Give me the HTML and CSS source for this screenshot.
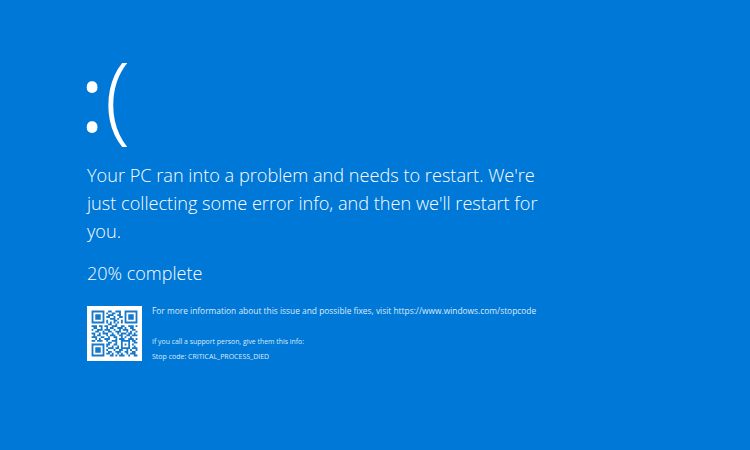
FILE: index.html
```html
<!DOCTYPE html>
<html lang="en">
<head>
    <meta charset="UTF-8">
    <meta name="viewport" content="width=device-width, initial-scale=1.0">
    <link rel="stylesheet" href="styles.css">
    <title>Stop code</title>
</head>
<body>
    <main class="pantalla">
        <div class="cara"><span class="caraOjos">:</span><span class="caraBoca">(</span></div>
        <p class="mensaje">Your PC ran into a problem and needs to restart. We're just collecting some error info, and then we'll restart for you.</p>
        <p class="progreso">20% complete</p>

        <div class="detalle">
            <!-- QR -->
            <svg class="qr" viewBox="0 0 30 30" aria-hidden="true">
                <rect class="qrFondo" width="30" height="30"/>
                <g transform="translate(2.5 2.5)">
                    <path class="qrModulos" d="M0 .5h7M18 .5h7M0 1.5h1M6 1.5h1M18 1.5h1M24 1.5h1M0 2.5h1M2 2.5h3M6 2.5h1M18 2.5h1M20 2.5h3M24 2.5h1M0 3.5h1M2 3.5h3M6 3.5h1M18 3.5h1M20 3.5h3M24 3.5h1M0 4.5h1M2 4.5h3M6 4.5h1M18 4.5h1M20 4.5h3M24 4.5h1M0 5.5h1M6 5.5h1M18 5.5h1M24 5.5h1M0 6.5h7M18 6.5h7
                    M0 18.5h7M0 19.5h1M6 19.5h1M0 20.5h1M2 20.5h3M6 20.5h1M0 21.5h1M2 21.5h3M6 21.5h1M0 22.5h1M2 22.5h3M6 22.5h1M0 23.5h1M6 23.5h1M0 24.5h7
                    M9 .5h2M13 .5h3M8 1.5h1M11 1.5h2M15 1.5h1M9 2.5h3M14 2.5h2M8 3.5h2M12 3.5h1M15 3.5h2M10 4.5h3M14 4.5h1M8 5.5h1M12 5.5h2M16 5.5h1M8 6.5h1M10 6.5h1M12 6.5h1M14 6.5h1M16 6.5h1M9 7.5h2M13 7.5h1
                    M0 8.5h3M4 8.5h2M7 8.5h2M11 8.5h3M16 8.5h2M20 8.5h3M24 8.5h1M1 9.5h2M5 9.5h1M8 9.5h1M10 9.5h2M14 9.5h3M18 9.5h1M21 9.5h2M0 10.5h1M3 10.5h3M7 10.5h3M12 10.5h1M15 10.5h1M17 10.5h3M22 10.5h2M2 11.5h2M6 11.5h1M9 11.5h2M13 11.5h3M19 11.5h1M21 11.5h1M24 11.5h1M0 12.5h2M4 12.5h1M6 12.5h3M11 12.5h1M14 12.5h1M16 12.5h3M20 12.5h2M23 12.5h1M1 13.5h1M3 13.5h2M8 13.5h1M10 13.5h3M15 13.5h2M19 13.5h2M22 13.5h3M0 14.5h3M5 14.5h2M9 14.5h1M12 14.5h2M16 14.5h1M18 14.5h1M21 14.5h1M2 15.5h1M4 15.5h1M7 15.5h3M13 15.5h1M15 15.5h3M20 15.5h3M24 15.5h1M0 16.5h2M3 16.5h3M8 16.5h1M11 16.5h3M16 16.5h5M22 16.5h2
                    M9 17.5h2M13 17.5h1M16 17.5h1M20 17.5h1M23 17.5h2M8 18.5h2M12 18.5h2M16 18.5h1M18 18.5h1M20 18.5h1M22 18.5h1M8 19.5h1M11 19.5h1M14 19.5h1M16 19.5h1M20 19.5h1M23 19.5h1M9 20.5h3M13 20.5h2M16 20.5h5M22 20.5h3M8 21.5h1M12 21.5h1M15 21.5h2M19 21.5h1M21 21.5h1M24 21.5h1M9 22.5h2M13 22.5h3M18 22.5h2M22 22.5h2M8 23.5h2M11 23.5h1M14 23.5h1M16 23.5h1M19 23.5h1M21 23.5h3M10 24.5h2M13 24.5h1M15 24.5h3M20 24.5h1M23 24.5h2"/>
                </g>
            </svg>

            <div class="info">
                <p class="infoUrl">For more information about this issue and possible fixes, visit https://www.windows.com/stopcode</p>
                <p class="infoSoporte">If you call a support person, give them this info:</p>
                <p class="infoCodigo">Stop code: CRITICAL_PROCESS_DIED</p>
            </div>
        </div>
    </main>
</body>
</html>
```

FILE: styles.css
```css
body {
    margin: 0;
    background-color: #0078d7;
    color: #fff;
    font-family: "Open Sans", "Noto Sans", sans-serif;
}

p {
    margin: 0;
}

.pantalla {
    box-sizing: border-box;
    width: 750px;
    height: 450px;
    padding: 54px 0 0 83px;
    overflow: hidden;
}

.cara {
    display: flex;
    align-items: flex-start;
    height: 103px;
}

.caraOjos {
    width: 24.5px;
    margin: -9px 0 0 -3px;
    font-size: 92px;
    line-height: 103px;
}

.caraBoca {
    margin-top: -10px;
    font-size: 95px;
    font-weight: 300;
    line-height: 103px;
}

.mensaje {
    width: 455px;
    margin: 4px 0 0 4px;
    font-size: 18.15px;
    font-weight: 300;
    line-height: 28px;
}

.progreso {
    margin: 14px 0 0 4px;
    font-size: 18px;
    font-weight: 300;
    line-height: 28px;
}

.detalle {
    display: flex;
    gap: 10px;
    margin: 19px 0 0 4px;
}

.qr {
    display: block;
    width: 55px;
    height: 55px;
    flex: none;
    filter: blur(.3px);
}

.qrFondo {
    fill: #fff;
}

.qrModulos {
    fill: none;
    stroke: #1a78c8;
    stroke-width: 1;
}

.info {
    color: #dcebf9;
}

.infoUrl {
    line-height: 10px;
    font-size: 8.4px;
}

.infoSoporte {
    margin-top: 21px;
    line-height: 10px;
    font-size: 6.9px;
}

.infoCodigo {
    margin-top: 5px;
    line-height: 10px;
    font-size: 7px;
}
```
